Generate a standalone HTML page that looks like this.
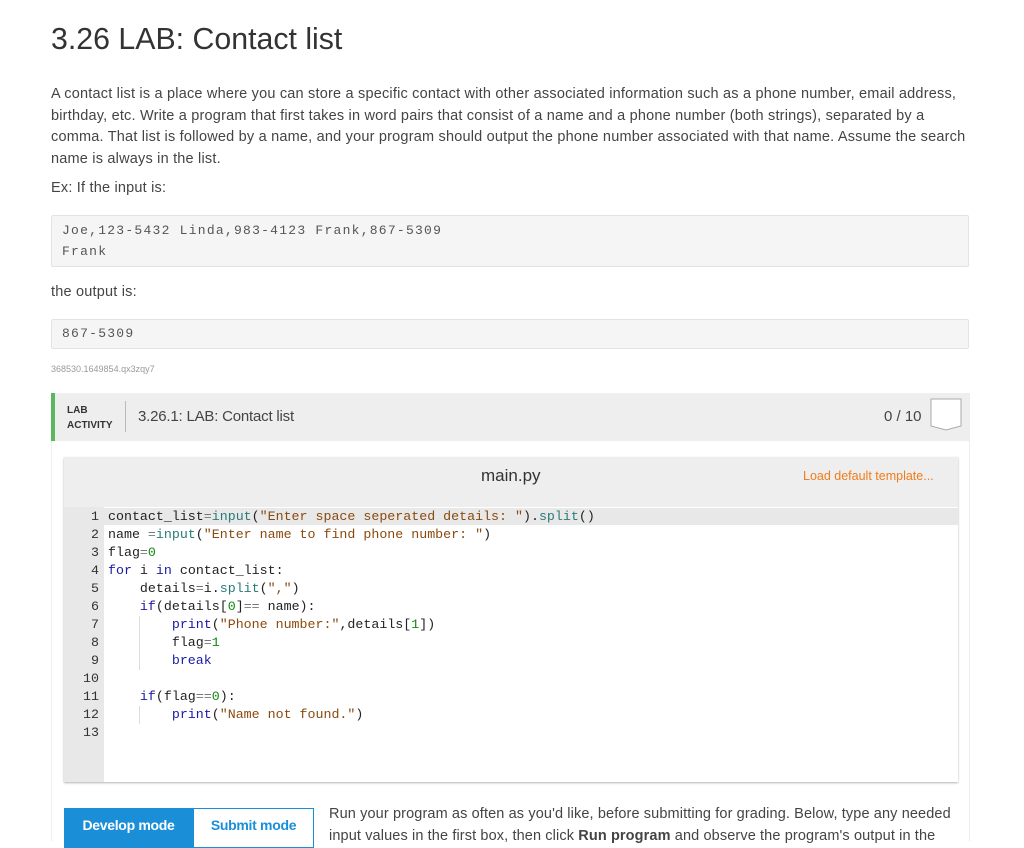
<!DOCTYPE html>
<html><head><meta charset="utf-8"><style>
*{box-sizing:border-box}
body{margin:0;background:#fff;font-family:"Liberation Sans",sans-serif;color:#333;width:1024px;height:841px;overflow:hidden;position:relative}
.a{position:absolute}
h1{position:absolute;left:51px;top:23px;margin:0;font-weight:normal;font-size:30.3px;color:#333}
p{margin:0}
.txt{font-size:14.5px;line-height:21.5px;color:#444;letter-spacing:0.2px;white-space:nowrap}
.pre{position:absolute;left:51px;width:918px;background:#f5f5f5;border:1px solid #e3e3e3;border-radius:2px;font-family:"Liberation Mono",monospace;font-size:13px;letter-spacing:1.25px;color:#555;padding:0 10px;line-height:21px}
.code{font-family:"Liberation Mono",monospace;font-size:13.3px;line-height:18px;white-space:pre;color:#222}
.k{color:#1a1aa6}.s{color:#8a4a0e}.n{color:#118811}.f{color:#2a7a7a}.o{color:#777}
</style></head><body>
<h1>3.26 LAB: Contact list</h1>
<div class="a txt" style="left:51px;top:84px">A contact list is a place where you can store a specific contact with other associated information such as a phone number, email address,<br>birthday, etc. Write a program that first takes in word pairs that consist of a name and a phone number (both strings), separated by a<br>comma. That list is followed by a name, and your program should output the phone number associated with that name. Assume the search<br>name is always in the list.</div>
<div class="a txt" style="left:51px;top:178px">Ex: If the input is:</div>
<div class="pre" style="top:215px;height:52px;padding-top:4px">Joe,123-5432 Linda,983-4123 Frank,867-5309<br>Frank</div>
<div class="a txt" style="left:51px;top:282px">the output is:</div>
<div class="pre" style="top:319px;height:30px;padding-top:3px">867-5309</div>
<div class="a" style="left:51px;top:364px;font-size:9px;color:#999">368530.1649854.qx3zqy7</div>

<div class="a" style="left:51px;top:393px;width:919px;height:448px;border:1px solid #eee;border-bottom:none"></div>
<div class="a" style="left:51px;top:393px;width:919px;height:48px;background:#eee;border-left:4px solid #5cb85c"></div>
<div class="a" style="left:67px;top:403px;font-size:10px;font-weight:bold;line-height:15px;color:#333">LAB<br>ACTIVITY</div>
<div class="a" style="left:125px;top:401px;width:1px;height:31px;background:#bbb"></div>
<div class="a" style="left:138px;top:408px;font-size:15px;color:#444;letter-spacing:-0.2px">3.26.1: LAB: Contact list</div>
<div class="a" style="left:884px;top:408px;font-size:15px;color:#444">0 / 10</div>
<svg class="a" style="left:930px;top:398px" width="32" height="34"><path d="M1 1H31V28L16 32L1 28Z" fill="#fff" stroke="#aaa"/></svg>

<div class="a" style="left:64px;top:457px;width:894px;height:325px;background:#eee;box-shadow:0 1px 2px rgba(0,0,0,.3)"></div>
<div class="a" style="left:481px;top:466px;font-size:17px;color:#333">main.py</div>
<div class="a" style="left:803px;top:469px;font-size:12.5px;color:#f07c1c">Load default template...</div>
<div class="a" style="left:104px;top:507px;width:854px;height:275px;background:#fff"></div>
<div class="a" style="left:64px;top:507px;width:40px;height:275px;background:#e8e8e8"></div>
<div class="a" style="left:64px;top:508px;width:894px;height:17px;background:#e8e8e8"></div>
<div class="a code" style="left:64px;top:508px;width:35px;text-align:right;color:#333">1
2
3
4
5
6
7
8
9
10
11
12
13</div>
<div class="a" style="left:139px;top:616px;width:1px;height:54px;background:#ddd"></div>
<div class="a" style="left:139px;top:706px;width:1px;height:18px;background:#ddd"></div>
<div class="a code" style="left:108px;top:508px">contact_list<span class="o">=</span><span class="f">input</span>(<span class="s">"Enter space seperated details: "</span>).<span class="f">split</span>()
name <span class="o">=</span><span class="f">input</span>(<span class="s">"Enter name to find phone number: "</span>)
flag<span class="o">=</span><span class="n">0</span>
<span class="k">for</span> i <span class="k">in</span> contact_list:
    details<span class="o">=</span>i.<span class="f">split</span>(<span class="s">","</span>)
    <span class="k">if</span>(details[<span class="n">0</span>]<span class="o">==</span> name):
        <span class="k">print</span>(<span class="s">"Phone number:"</span>,details[<span class="n">1</span>])
        flag<span class="o">=</span><span class="n">1</span>
        <span class="k">break</span>

    <span class="k">if</span>(flag<span class="o">==</span><span class="n">0</span>):
        <span class="k">print</span>(<span class="s">"Name not found."</span>)
</div>

<div class="a" style="left:64px;top:808px;width:129px;height:40px;background:#1a8fd8;color:#fff;font-weight:bold;font-size:14px;letter-spacing:-0.3px;text-align:center;line-height:34px">Develop mode</div>
<div class="a" style="left:193px;top:808px;width:121px;height:40px;border:1px solid #1a8fd8;color:#1a8fd8;font-weight:bold;font-size:14px;letter-spacing:-0.3px;text-align:center;line-height:32px">Submit mode</div>
<div class="a txt" style="left:329px;top:804px;letter-spacing:0.12px">Run your program as often as you'd like, before submitting for grading. Below, type any needed<br>input values in the first box, then click <b>Run program</b> and observe the program's output in the</div>
</body></html>
